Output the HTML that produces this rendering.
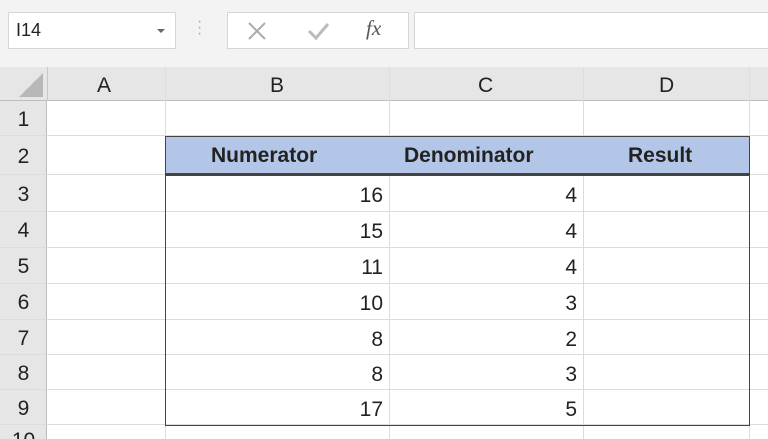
<!DOCTYPE html><html><head><style>
html,body{margin:0;width:768px;height:439px;overflow:hidden}
body{background:#fff;font-family:"Liberation Sans",sans-serif;position:relative}
.a{position:absolute;box-sizing:border-box}
.t{position:absolute;font-size:21px;color:#222;line-height:1}
</style></head><body>
<div class="a" style="left:0;top:0;width:768px;height:67px;background:#f3f3f3"></div>
<div class="a" style="left:8px;top:12px;width:168px;height:37px;background:#fff;border:1px solid #d6d6d6"></div>
<div class="t" style="left:16px;top:21px;font-size:18px">I14</div>
<div class="a" style="left:157px;top:29px;border-left:4px solid transparent;border-right:4px solid transparent;border-top:4px solid #666"></div>
<div class="t" style="left:197px;top:19px;color:#aaa;font-size:16px;line-height:6px">·<br>·<br>·</div>
<div class="a" style="left:227px;top:12px;width:182px;height:37px;background:#fff;border:1px solid #d6d6d6"></div>
<svg class="a" style="left:246px;top:20px" width="140" height="22"><path d="M3 3L19 19M19 3L3 19" stroke="#aaa" stroke-width="2" fill="none"/><path d="M63 11L70 18L82 4" stroke="#bbb" stroke-width="3" fill="none"/></svg>
<div class="t" style="left:366px;top:18px;font-family:'Liberation Serif',serif;font-style:italic;color:#555;font-size:21px">fx</div>
<div class="a" style="left:414px;top:12px;width:360px;height:37px;background:#fff;border:1px solid #d6d6d6"></div>
<div class="a" style="left:0;top:67px;width:768px;height:34px;background:#e6e6e6;border-bottom:1px solid #bdbdbd"></div>
<div class="a" style="left:0;top:101px;width:47px;height:340px;background:#e6e6e6;border-right:1px solid #bdbdbd"></div>
<svg class="a" style="left:18px;top:72px" width="26" height="26"><path d="M25 1V25H1Z" fill="#b8b8b8"/></svg>
<div class="a" style="left:47px;top:67px;width:1px;height:34px;background:#c8c8c8"></div>
<div class="a" style="left:165px;top:67px;width:1px;height:372px;background:#dcdcdc"></div>
<div class="a" style="left:389px;top:67px;width:1px;height:372px;background:#dcdcdc"></div>
<div class="a" style="left:583px;top:67px;width:1px;height:372px;background:#dcdcdc"></div>
<div class="a" style="left:749px;top:67px;width:1px;height:372px;background:#dcdcdc"></div>
<div class="t" style="left:97px;top:75px">A</div>
<div class="t" style="left:270px;top:75px">B</div>
<div class="t" style="left:478px;top:75px">C</div>
<div class="t" style="left:659px;top:75px">D</div>
<div id="rows"></div>
<div class="a" style="left:165px;top:136px;width:585px;height:39px;background:#b4c6e7"></div>
<div class="a" style="left:165px;top:136px;width:585px;height:290px;border:1px solid #444"></div>
<div class="a" style="left:165px;top:173px;width:585px;height:3px;background:#444"></div>
<div class="t" style="left:211px;top:145px;font-weight:bold;font-size:21px">Numerator</div>
<div class="t" style="left:404px;top:145px;font-weight:bold;font-size:21px">Denominator</div>
<div class="t" style="left:628px;top:145px;font-weight:bold;font-size:21px">Result</div>
<script>
var b=[101,136,175,212,248,284,320,355,390,425,460];var h='';
var B=['','','16','15','11','10','8','8','17'],C=['','','4','4','4','3','2','3','5'];
for(var i=0;i<10;i++){var y=b[i],y2=b[i+1];
h+='<div class="a" style="left:0;top:'+(y2-1)+'px;width:768px;height:1px;background:#dcdcdc"></div>';
h+='<div class="t" style="left:0;width:47px;text-align:center;top:'+(i==9?430:((y+y2)/2-10))+'px">'+(i+1)+'</div>';
if(B[i])h+='<div class="t" style="left:165px;width:218px;text-align:right;top:'+((y+y2)/2-9)+'px">'+B[i]+'</div><div class="t" style="left:389px;width:188px;text-align:right;top:'+((y+y2)/2-9)+'px">'+C[i]+'</div>';}
document.getElementById('rows').innerHTML=h;
</script>
</body></html>
